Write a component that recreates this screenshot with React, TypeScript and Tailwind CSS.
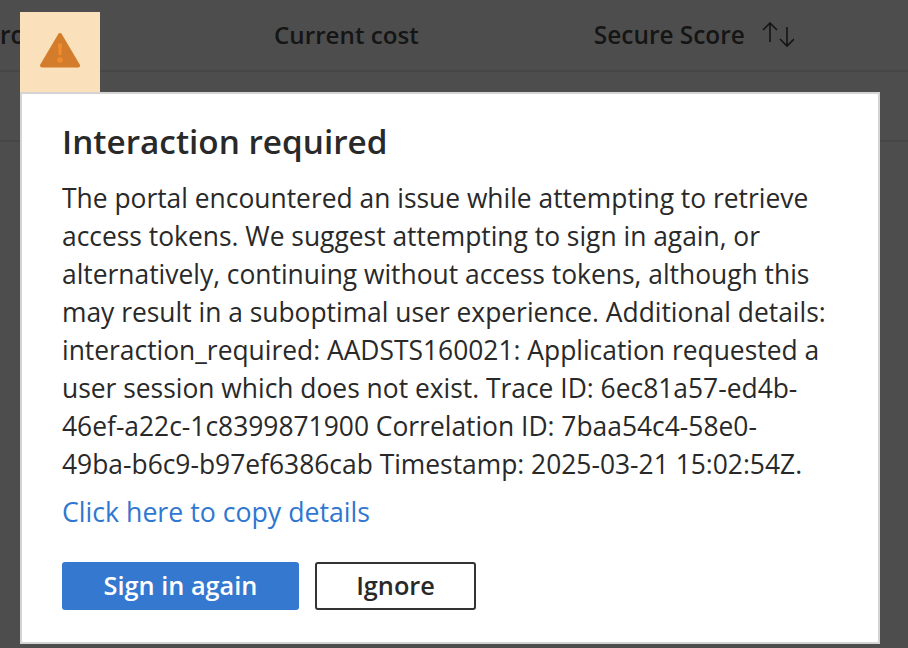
import React from 'react';

const App: React.FC = () => {
  return (
    <div className="relative w-[908px] h-[648px] overflow-hidden bg-[#4d4d4d] text-[#292929] font-['Open_Sans','Noto_Sans',sans-serif]">
      {/* Grid header behind the overlay */}
      <div className="flex h-[72px] items-center border-b-2 border-[#464646] text-[24.4px] font-semibold text-[#151515]">
        <span className="w-[20px] text-right">ro</span>
        <span className="ml-[254px] text-[24.2px]">Current cost</span>
        <span className="ml-[175px]">Secure Score</span>
        <svg className="ml-[17px]" width="32" height="26" viewBox="0 0 32 26" fill="none" stroke="#151515" strokeWidth="1.6">
          <path d="M8 1V20M1 8L8 1L15 8" />
          <path d="M25 5V24M18 17L25 24L32 17" />
        </svg>
      </div>
      <div className="h-[70px] border-b-2 border-[#464646]" />

      {/* Warning tab */}
      <div className="absolute left-[20px] top-[12px] flex h-[80px] w-[80px] items-start justify-center bg-[#fbe0bc] pt-[20px]">
        <svg width="40" height="36" viewBox="0 0 40 36">
          <path d="M20 3 L38 33.5 H2 Z" fill="#d37c2b" stroke="#d37c2b" strokeWidth="4" strokeLinejoin="round" />
          <path d="M18 11.5H22L21.4 23H18.6Z" fill="#ee8c2e" />
          <circle cx="20" cy="28" r="2.8" fill="#ee8c2e" />
        </svg>
      </div>

      {/* Dialog */}
      <div className="absolute left-[20px] top-[92px] h-[552px] w-[860px] border-2 border-[#d4d4d4] bg-white pl-[40px] pt-[27px]">
        <h1 className="text-[33.3px] font-semibold leading-[40px]">Interaction required</h1>
        <p className="mt-[18px] w-[790px] text-[26.4px] leading-[38px]">
          The portal encountered an issue while attempting to retrieve access tokens. We suggest attempting to sign in again, or alternatively, continuing without access tokens, although this may result in a suboptimal user experience. Additional details: interaction_required: AADSTS160021: Application requested a user session which does not exist. Trace ID: 6ec81a57-ed4b-46ef-a22c-1c8399871900 Correlation ID: 7baa54c4-58e0-<br />49ba-b6c9-b97ef6386cab Timestamp: 2025-03-21 15:02:54Z.
        </p>
        <a className="mt-[10px] block text-[26.7px] leading-[38px] text-[#2f77d0]">Click here to copy details</a>
        <div className="mt-[31px] flex gap-[16px]">
          <button className="h-[48px] w-[237px] rounded-[3px] bg-[#3578d0] text-[25.3px] font-semibold text-white">Sign in again</button>
          <button className="h-[48px] w-[161px] rounded-[3px] border-2 border-[#333333] bg-white text-[25.3px] font-semibold">Ignore</button>
        </div>
      </div>
    </div>
  );
};

export default App;
